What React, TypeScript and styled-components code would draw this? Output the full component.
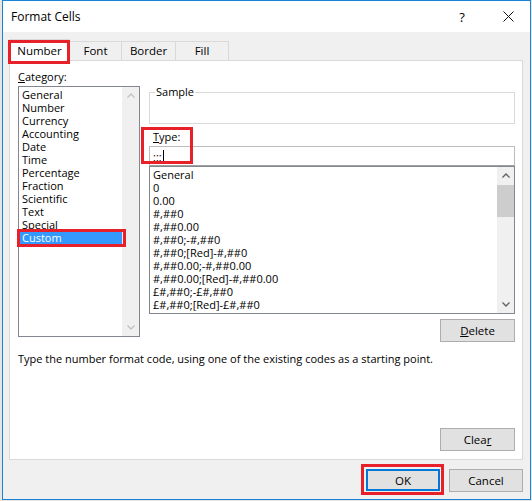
import React from "react";
import styled, { createGlobalStyle } from "styled-components";

const GlobalStyle = createGlobalStyle`
  html, body {
    margin: 0;
    padding: 0;
    background: #e6e6e6;
  }

  body {
    font-family: "Open Sans", "Noto Sans", sans-serif;
    font-size: 11px;
    color: #000;
  }
`;

const RED = "#e8202a";

const Desktop = styled.div`
  width: 532px;
  height: 501px;
  padding-left: 2px;
  box-sizing: border-box;
  overflow: hidden;
`;

const Window = styled.div`
  width: 529px;
  height: 500px;
  box-sizing: border-box;
  border: 1px solid #1883d7;
  background: #f0f0f0;
  display: flex;
  flex-direction: column;
`;

const TitleBar = styled.div`
  height: 31px;
  flex: none;
  display: flex;
  align-items: center;
  padding-left: 8px;
  background: #fff;
`;

const Title = styled.div`
  flex: 1;
  font-size: 12px;
`;

const HelpGlyph = styled.div`
  width: 10px;
  margin-right: 35px;
  font-size: 13px;
  text-align: center;
`;

const CloseButton = styled.div`
  width: 12px;
  margin-right: 16px;
  display: flex;
  align-items: center;
  justify-content: center;
`;

const Body = styled.div`
  flex: 1;
  display: flex;
  flex-direction: column;
  padding: 7px 7px 0 6px;
`;

const TabStrip = styled.div`
  display: flex;
  align-items: flex-end;
  height: 22px;
  margin-bottom: -1px;
  position: relative;
  z-index: 1;
`;

const Tab = styled.div<{ $active?: boolean; $width: number }>`
  position: relative;
  box-sizing: border-box;
  width: ${p => p.$width}px;
  height: ${p => (p.$active ? 22 : 19)}px;
  margin-bottom: ${p => (p.$active ? 0 : 1)}px;
  margin-left: -1px;
  padding-top: ${p => (p.$active ? 3 : 1)}px;
  line-height: 16px;
  text-align: center;
  background: ${p => (p.$active ? "#fff" : "#f0f0f0")};
  border: 1px solid #d9d9d9;
  border-bottom: none;
  font-size: 11.5px;

  &:first-child {
    margin-left: 0;
  }
`;

const RedMark = styled.div<{ $t: number; $r: number; $b: number; $l: number }>`
  position: absolute;
  top: ${p => p.$t}px;
  right: ${p => p.$r}px;
  bottom: ${p => p.$b}px;
  left: ${p => p.$l}px;
  box-sizing: border-box;
  border: 3px solid ${RED};
  pointer-events: none;
  z-index: 5;
`;

const TypeMark = styled(RedMark)`
  right: auto;
  bottom: auto;
  width: 52px;
  height: 37px;
`;

const Panel = styled.div`
  width: 514px;
  height: 400px;
  box-sizing: border-box;
  border: 1px solid #d9d9d9;
  background: #fff;
  padding: 8px 7px 8px 8px;
  display: flex;
  flex-direction: column;
`;

const TopArea = styled.div`
  display: grid;
  grid-template-columns: 122px 1fr;
  column-gap: 9px;
`;

const Column = styled.div`
  position: relative;
  display: flex;
  flex-direction: column;
`;

const Label = styled.div<{ $gap?: number }>`
  line-height: 15px;
  height: 15px;
  margin-top: ${p => p.$gap || 0}px;
  margin-bottom: 2px;
  padding-left: ${p => (p.$gap ? 4 : 0)}px;
`;

const ListBox = styled.div<{ $height: number }>`
  height: ${p => p.$height}px;
  box-sizing: border-box;
  border: 1px solid #828790;
  display: flex;
`;

const ListItems = styled.div<{ $indent: number }>`
  flex: 1;
  padding: 1px 0 0 1px;
  display: flex;
  flex-direction: column;

  > div {
    padding-left: ${p => p.$indent}px;
  }
`;

const Item = styled.div<{ $selected?: boolean }>`
  position: relative;
  height: 13px;
  line-height: 13px;
  white-space: nowrap;
  background: ${p => (p.$selected ? "#3399ff" : "transparent")};
  color: ${p => (p.$selected ? "#fff" : "#000")};
`;

const ScrollBar = styled.div`
  width: 17px;
  flex: none;
  background: #f0f0f0;
  display: flex;
  flex-direction: column;
`;

const ScrollArrow = styled.div`
  height: 17px;
  display: flex;
  align-items: center;
  justify-content: center;
`;

const ScrollTrack = styled.div`
  flex: 1;
  padding-top: 1px;
`;

const Thumb = styled.div`
  height: 32px;
  background: #cdcdcd;
`;

const Sample = styled.fieldset`
  margin: 16px 0 0;
  padding: 0 5px;
  height: 39px;
  box-sizing: border-box;
  border: 1px solid #d9d9d9;
  min-width: 0;

  legend {
    padding: 0 1px;
    line-height: 14px;
    font-size: 11px;
  }
`;

const TypeInput = styled.div`
  height: 20px;
  box-sizing: border-box;
  border: 1px solid #bcbcbc;
  border-bottom-color: #a0a0a0;
  padding-left: 3px;
  line-height: 17px;
  display: flex;
  align-items: center;
`;

const Caret = styled.span`
  display: inline-block;
  width: 1px;
  height: 12px;
  margin-left: 1px;
  background: #000;
`;

const Button = styled.div<{ $default?: boolean }>`
  position: relative;
  width: 74px;
  height: ${p => (p.$default ? 22 : 23)}px;
  box-sizing: border-box;
  border: ${p => (p.$default ? "2px solid #0078d7" : "1px solid #adadad")};
  background: #e1e1e1;
  display: flex;
  align-items: center;
  justify-content: center;
  font-size: 11.5px;
`;

const PanelButton = styled(Button)<{ $push?: boolean }>`
  align-self: flex-end;
  width: 75px;
  margin-top: ${p => (p.$push ? "auto" : "5px")};
`;

const HelpText = styled.div`
  margin-top: 9px;
  line-height: 15px;
`;

const Footer = styled.div`
  display: flex;
  justify-content: flex-end;
  gap: 9px;
  padding-top: 9px;
`;

const Chevron = ({ up, color }: { up?: boolean; color: string }) => (
  <svg width="8" height="5" viewBox="0 0 8 5">
    <polyline
      points={up ? "0.5,4.5 4,1 7.5,4.5" : "0.5,0.5 4,4 7.5,0.5"}
      fill="none"
      stroke={color}
      strokeWidth="1.3"
    />
  </svg>
);

const categories = [
  "General",
  "Number",
  "Currency",
  "Accounting",
  "Date",
  "Time",
  "Percentage",
  "Fraction",
  "Scientific",
  "Text",
  "Special",
  "Custom"
];

const formats = [
  "General",
  "0",
  "0.00",
  "#,##0",
  "#,##0.00",
  "#,##0;-#,##0",
  "#,##0;[Red]-#,##0",
  "#,##0.00;-#,##0.00",
  "#,##0.00;[Red]-#,##0.00",
  "£#,##0;-£#,##0",
  "£#,##0;[Red]-£#,##0"
];

const tabs = [
  { name: "Number", width: 61 },
  { name: "Font", width: 53 },
  { name: "Border", width: 55 },
  { name: "Fill", width: 54 }
];

export default function App() {
  return (
    <Desktop>
      <GlobalStyle />
      <Window>
        <TitleBar>
          <Title>Format Cells</Title>
          <HelpGlyph>?</HelpGlyph>
          <CloseButton>
            <svg width="11" height="11" viewBox="0 0 11 11">
              <path d="M0.5 0.5 L10.5 10.5 M10.5 0.5 L0.5 10.5" stroke="#111" strokeWidth="1" />
            </svg>
          </CloseButton>
        </TitleBar>

        <Body>
          <TabStrip>
            {tabs.map((t, i) => (
              <Tab key={t.name} $active={i === 0} $width={t.width}>
                {t.name}
                {i === 0 && <RedMark $t={0} $r={-1} $b={-3} $l={-2} />}
              </Tab>
            ))}
          </TabStrip>

          <Panel>
            <TopArea>
              <Column>
                <Label>
                  <u>C</u>ategory:
                </Label>
                <ListBox $height={251}>
                  <ListItems $indent={2}>
                    {categories.map(c => (
                      <Item key={c} $selected={c === "Custom"}>
                        {c}
                        {c === "Custom" && <RedMark $t={-2} $r={-4} $b={-3} $l={-3} />}
                      </Item>
                    ))}
                  </ListItems>
                  <ScrollBar>
                    <ScrollArrow>
                      <Chevron up color="#c2c2c2" />
                    </ScrollArrow>
                    <ScrollTrack />
                    <ScrollArrow>
                      <Chevron color="#c2c2c2" />
                    </ScrollArrow>
                  </ScrollBar>
                </ListBox>
              </Column>

              <Column>
                <Sample>
                  <legend>Sample</legend>
                </Sample>
                <Label $gap={5}>
                  <u>T</u>ype:
                </Label>
                <TypeInput>
                  ;;;
                  <Caret />
                </TypeInput>
                <ListBox $height={148}>
                  <ListItems $indent={2}>
                    {formats.map(f => (
                      <Item key={f}>{f}</Item>
                    ))}
                  </ListItems>
                  <ScrollBar>
                    <ScrollArrow>
                      <Chevron up color="#606060" />
                    </ScrollArrow>
                    <ScrollTrack>
                      <Thumb />
                    </ScrollTrack>
                    <ScrollArrow>
                      <Chevron color="#606060" />
                    </ScrollArrow>
                  </ScrollBar>
                </ListBox>
                <PanelButton>
                  <span>
                    <u>D</u>elete
                  </span>
                </PanelButton>
                <TypeMark $t={58} $r={0} $b={0} $l={-8} />
              </Column>
            </TopArea>

            <HelpText>
              Type the number format code, using one of the existing codes as a starting point.
            </HelpText>

            <PanelButton $push>
              <span>
                Clea<u>r</u>
              </span>
            </PanelButton>
          </Panel>

          <Footer>
            <Button $default>
              OK
              <RedMark $t={-7} $r={-6} $b={-6} $l={-7} />
            </Button>
            <Button>Cancel</Button>
          </Footer>
        </Body>
      </Window>
    </Desktop>
  );
}
